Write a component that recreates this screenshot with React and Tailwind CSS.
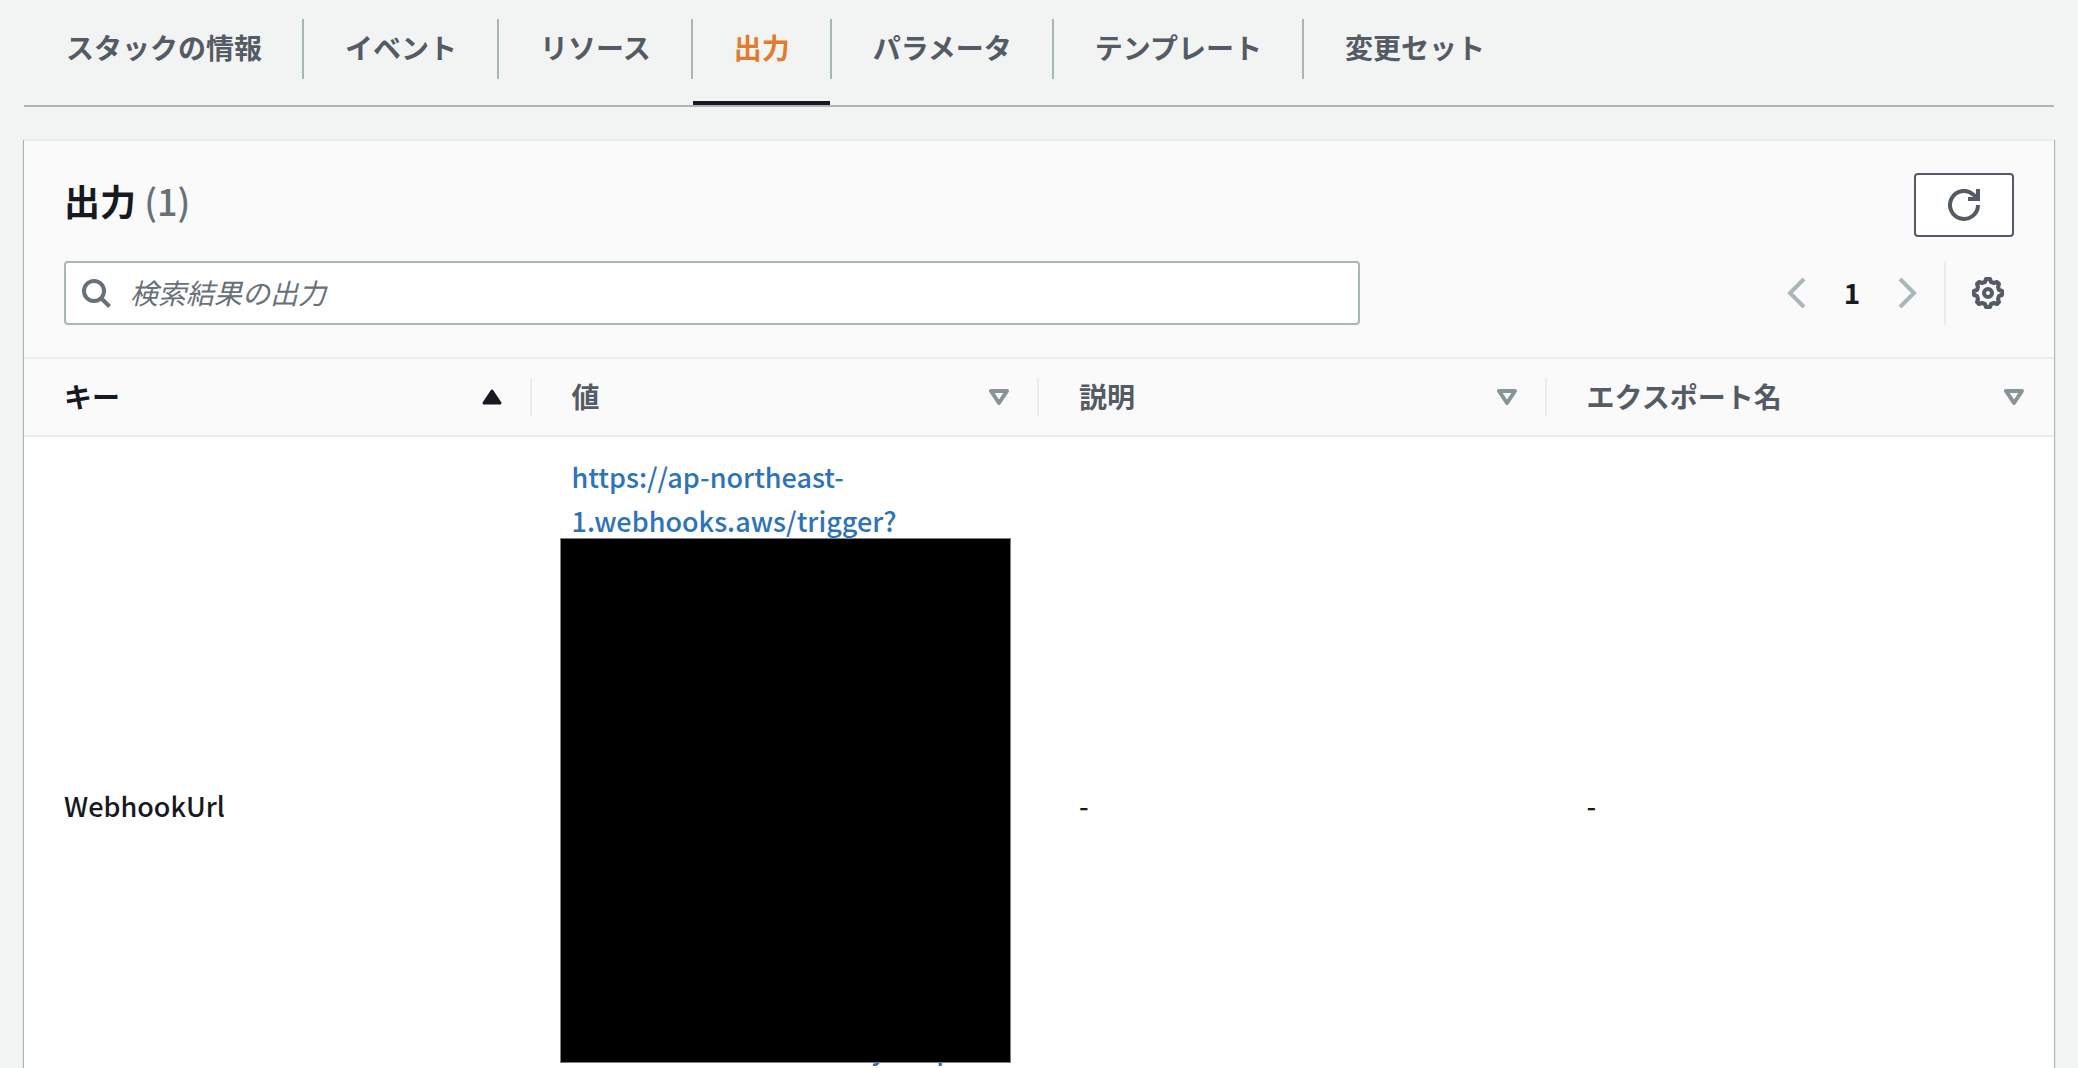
import React, { useState } from 'react';

const tabs = ['スタックの情報', 'イベント', 'リソース', '出力', 'パラメータ', 'テンプレート', '変更セット'];

const columns = [
  { id: 'key', label: 'キー' },
  { id: 'value', label: '値' },
  { id: 'description', label: '説明' },
  { id: 'exportName', label: 'エクスポート名' },
];

const RefreshIcon = () => (
  <svg className="size-8" viewBox="0 0 16 16" fill="none" stroke="currentColor" strokeWidth="2" aria-hidden="true">
    <path d="M15 8A7 7 0 1 1 12.600 2.700L15 5" />
    <path d="M15 0V5H10" />
  </svg>
);

const SearchIcon = () => (
  <svg className="size-8" viewBox="0 0 32 32" fill="none" stroke="currentColor" strokeWidth="4" aria-hidden="true">
    <circle cx="12" cy="14" r="10" />
    <path d="M19 21L27.500 29.500" />
  </svg>
);

const ChevronIcon = ({ next }) => (
  <svg className="size-8" viewBox="0 0 32 32" fill="none" stroke="currentColor" strokeWidth="4" aria-hidden="true">
    {next ? <path d="M8 2L22 16L8 30" /> : <path d="M24 2L10 16L24 30" />}
  </svg>
);

const GearIcon = () => (
  <svg className="size-8" viewBox="0 0 32 32" fill="none" stroke="currentColor" strokeWidth="4" strokeLinejoin="round" aria-hidden="true">
    <circle cx="16" cy="16" r="4" />
    <path d="M14 2H18L19 5L22 6L25 5L27 7L26 10L27 13L30 14V18L27 19L26 22L27 25L25 27L22 26L19 27L18 30H14L13 27L10 26L7 27L5 25L6 22L5 19L2 18V14L5 13L6 10L5 7L7 5L10 6L13 5Z" />
  </svg>
);

const SortIcon = ({ active }) => (
  <svg className="h-4 w-5" viewBox="0 0 20 16" stroke="currentColor" strokeLinejoin="round" aria-hidden="true">
    {active ? (
      <path d="M10 2L18 14H2Z" fill="currentColor" strokeWidth="3" />
    ) : (
      <path d="M2 2H18L10 14Z" fill="none" strokeWidth="4" />
    )}
  </svg>
);

const Tabs = ({ current, onChange }) => (
  <div role="tablist" className="flex border-b-2 border-[#aab7b8] pl-px">
    {tabs.map((tab, i) => (
      <button
        key={tab}
        role="tab"
        aria-selected={tab === current}
        onClick={() => onChange(tab)}
        className={`relative flex h-[105px] items-start pt-[19px] font-bold ${tab === current ? 'text-[#e07b2f]' : 'text-[#545b64]'}`}
      >
        <span className={`flex h-[60px] items-center pr-10 pb-1 pl-[41px] ${i < tabs.length - 1 ? 'border-r-2 border-[#aab7b8]' : ''}`}>
          {tab}
        </span>
        {tab === current && <span className="absolute bottom-0 left-0 right-[2px] h-1 bg-[#16191f]" />}
      </button>
    ))}
  </div>
);

const Toolbar = () => {
  const [query, setQuery] = useState('');

  return (
    <div className="border-b-2 border-[#eaeded] px-10 pt-8 pb-8">
      <div className="flex items-start justify-between">
        <h2 className="text-[36px] leading-[54px] font-bold text-[#16191f]">
          出力 <span className="font-medium text-[#687078]">(1)</span>
        </h2>
        <button aria-label="更新" className="flex h-16 w-[100px] items-center justify-center rounded-sm border-2 border-[#545b64] bg-white text-[#545b64]">
          <RefreshIcon />
        </button>
      </div>
      <div className="mt-6 flex items-center justify-between">
        <div className="w-2/3 pr-1">
          <label className="flex h-16 items-center gap-4 rounded-sm border-2 border-[#aab7b8] bg-white px-4 text-[#687078]">
            <SearchIcon />
            <input
              type="text"
              aria-label="検索結果の出力"
              placeholder="検索結果の出力"
              value={query}
              onChange={(e) => setQuery(e.target.value)}
              className="h-full flex-1 pb-[2px] outline-none placeholder:text-[#687078] placeholder:italic"
            />
          </label>
        </div>
        <div className="flex items-center">
          <button aria-label="前のページ" className="text-[#aab7b8]">
            <ChevronIcon />
          </button>
          <button className="w-20 pb-[2px] text-center font-bold text-[#16191f]">1</button>
          <button aria-label="次のページ" className="text-[#aab7b8]">
            <ChevronIcon next />
          </button>
          <div className="ml-5 flex h-16 items-center border-l-2 border-[#eaeded] pr-[10px] pl-[26px]">
            <button aria-label="設定" className="text-[#545b64]">
              <GearIcon />
            </button>
          </div>
        </div>
      </div>
    </div>
  );
};

const OutputsTable = () => (
  <table className="w-full table-fixed border-collapse text-left">
    <thead className="bg-[#fafafa]">
      <tr className="border-b-2 border-[#eaeded]">
        {columns.map((col, i) => (
          <th key={col.id} scope="col" className={`py-[19px] pr-0 pl-10 font-bold ${i === 0 ? 'text-[#16191f]' : 'text-[#545b64]'}`}>
            <div className={`flex h-[38px] items-center justify-between ${i < columns.length - 1 ? 'border-r-2 border-[#eaeded] pr-7' : 'pr-[30px]'}`}>
              <span className="pb-[2px]">{col.label}</span>
              <button aria-label={`${col.label}で並べ替え`} className={i === 0 ? 'text-[#16191f]' : 'text-[#879596]'}>
                <SortIcon active={i === 0} />
              </button>
            </div>
          </th>
        ))}
      </tr>
    </thead>
    <tbody>
      <tr className="h-[738px] bg-white text-[27px] font-medium text-[#16191f]">
        <td className="pl-10">WebhookUrl</td>
        <td className="relative pt-[18px] pl-10 align-top">
          <a href="#webhook" className="block text-[#2e73b8]">
            https://ap-northeast-
            <br />
            1.webhooks.aws/trigger?
            <span className="flex gap-[50px] pt-[484px] pl-[300px]">
              <span>y</span>
              <span>p</span>
            </span>
          </a>
          {/* redacted part of the url */}
          <div className="absolute top-[101px] right-7 left-7 h-[525px] border border-[#808080] bg-black" />
        </td>
        <td className="pl-10">-</td>
        <td className="pl-10">-</td>
      </tr>
    </tbody>
  </table>
);

const App = () => {
  const [currentTab, setCurrentTab] = useState('出力');

  return (
    <main className="h-screen overflow-hidden bg-[#f2f4f3] px-6 font-['Noto_Sans_CJK_JP',sans-serif] text-[28px] leading-[44px]">
      <Tabs current={currentTab} onChange={setCurrentTab} />
      <section className="mt-8 border-t-2 border-[#eaeded] bg-[#fafafa] shadow-[1px_1px_1px_0_#aab7b8,-1px_1px_1px_0_#aab7b8]">
        <Toolbar />
        <OutputsTable />
      </section>
    </main>
  );
};

export default App;
